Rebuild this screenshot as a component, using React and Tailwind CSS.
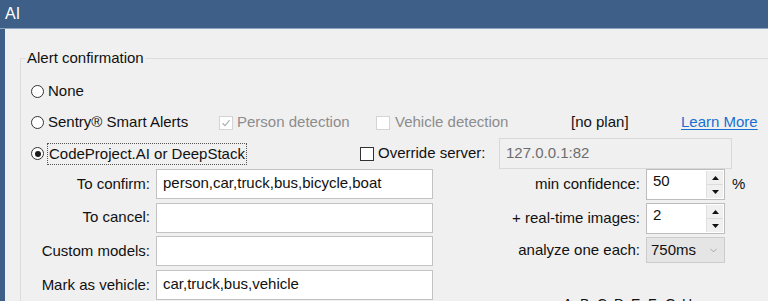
import { ChevronDown } from "lucide-react";

function Radio({ checked }) {
  return (
    <span className="w-[13px] h-[13px] rounded-full border border-[#333] bg-white flex items-center justify-center shrink-0">
      {checked && <span className="w-[6px] h-[6px] rounded-full bg-[#1a1a1a]"></span>}
    </span>
  );
}

function Check({ checked, disabled }) {
  return (
    <span
      className={
        disabled
          ? "w-[14px] h-[14px] border border-[#d4d4d4] bg-white flex items-center justify-center shrink-0"
          : "w-[14px] h-[14px] border border-[#333] bg-white flex items-center justify-center shrink-0"
      }
    >
      {checked && (
        <svg width="10" height="10" viewBox="0 0 10 10">
          <path d="M1.5 5.2 L4 7.6 L8.6 2.2" fill="none" stroke="#b0b0b0" strokeWidth="1.2" />
        </svg>
      )}
    </span>
  );
}

function Spin({ value }) {
  return (
    <div className="w-[79px] h-[31px] border border-[#bdbdbd] bg-white flex">
      <div className="flex-1 pl-[6px] leading-[22px]">{value}</div>
      <div className="w-[17px] flex flex-col border-l border-[#e0e0e0] bg-[#f0f0f0] my-[1px] mr-[1px]">
        <div className="flex-1 flex items-center justify-center border-b border-[#dcdcdc]">
          <svg width="7" height="4" viewBox="0 0 7 4"><path d="M0 4 L3.5 0 L7 4 Z" fill="#111" /></svg>
        </div>
        <div className="flex-1 flex items-center justify-center">
          <svg width="7" height="4" viewBox="0 0 7 4"><path d="M0 0 L3.5 4 L7 0 Z" fill="#111" /></svg>
        </div>
      </div>
    </div>
  );
}

const leftRows = [
  ["To confirm:", "person,car,truck,bus,bicycle,boat"],
  ["To cancel:", ""],
  ["Custom models:", ""],
  ["Mark as vehicle:", "car,truck,bus,vehicle"],
];

export default function App() {
  return (
    <div className="w-[768px] h-[301px] overflow-hidden bg-[#3d5f88] text-[15px] text-[#111] font-['Liberation_Sans',Arial,sans-serif]">
      {/* Title bar */}
      <div className="h-[29px] pl-[5px] flex items-center text-white text-[16px] border-b border-[#8ea3bd]">AI</div>

      {/* Page */}
      <div className="ml-[5px] h-[300px] bg-[#f0f0f0] pt-[19px] pl-[15px]">
        <fieldset className="border border-[#dcdcdc] w-[900px] h-[400px]">
          <legend className="ml-[5px] px-[1px] leading-[20px]">Alert confirmation</legend>

          <div className="pl-[10px] flex flex-col">
            <div className="h-[31px] flex items-center gap-[4px] mt-[8px]">
              <Radio />
              <span>None</span>
            </div>

            <div className="h-[31px] flex items-center">
              <Radio />
              <span className="ml-[4px] w-[171px]">Sentry® Smart Alerts</span>
              <Check checked disabled />
              <span className="ml-[4px] w-[139px] text-[#8c8c8c]">Person detection</span>
              <Check disabled />
              <span className="ml-[5px] w-[176px] text-[#8c8c8c]">Vehicle detection</span>
              <span className="w-[110px]">[no plan]</span>
              <span className="text-[#1a6fd0] underline underline-offset-2">Learn More</span>
            </div>

            <div className="h-[31px] flex items-center">
              <Radio checked />
              <span className="ml-[3px] w-[313px] flex">
                <span className="border border-dotted border-[#555] px-[1px] leading-[20px]">CodeProject.AI or DeepStack</span>
              </span>
              <Check />
              <span className="ml-[4px] w-[121px]">Override server:</span>
              <span className="w-[233px] h-[31px] border border-[#d9d9d9] bg-[#f0f0f0] text-[#6d6d6d] pl-[6px] leading-[28px]">127.0.0.1:82</span>
            </div>
          </div>

          <div className="flex items-start">
            <div className="grid grid-cols-[129px_277px] gap-x-[6px] gap-y-[3.7px] items-center content-start">
              {leftRows.map(([label, value]) => (
                <div key={label} className="contents">
                  <span className="text-right">{label}</span>
                  <div className="h-[30px] border border-[#c3c3c3] bg-white pl-[6px] leading-[26px]">{value}</div>
                </div>
              ))}
            </div>

            <div className="flex flex-col">
              <div className="grid grid-cols-[207px_79px_auto] gap-x-[6px] gap-y-[3px] items-center">
                <span className="text-right">min confidence:</span>
                <Spin value="50" />
                <span className="pl-[1px]">%</span>

                <span className="text-right">+ real-time images:</span>
                <Spin value="2" />
                <span></span>

                <span className="text-right">analyze one each:</span>
                <div className="w-[79px] h-[26px] border border-[#cccccc] bg-[#e5e5e5] flex items-center pl-[4px] pr-[5px]">
                  <span className="flex-1">750ms</span>
                  <ChevronDown size={11} strokeWidth={1.5} className="text-[#888]" />
                </div>
                <span></span>
              </div>

              <div className="mt-[31px] ml-[130px] flex gap-[8px] text-[14px] leading-[21px]">
                {["A", "B", "C", "D", "E", "F", "G", "H"].map((l) => (
                  <span key={l} className="w-[9px]">{l}</span>
                ))}
              </div>
            </div>
          </div>
        </fieldset>
      </div>
    </div>
  );
}
